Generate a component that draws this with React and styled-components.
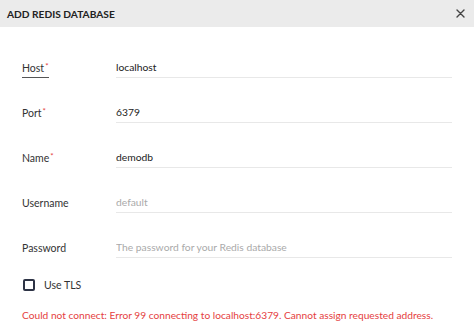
import React from 'react';
import styled, { createGlobalStyle } from 'styled-components';

const GlobalStyle = createGlobalStyle`
  body {
    margin: 0;
    background: #ffffff;
    font-family: 'Lato', 'Open Sans', sans-serif;
  }
`;

const Dialog = styled.div`
  width: 474px;
  height: 331px;
  background: #ffffff;
  overflow: hidden;
`;

const Header = styled.div`
  height: 27px;
  display: flex;
  align-items: center;
  justify-content: space-between;
  padding: 0 9px 0 7px;
  background: #ebebeb;
`;

const Title = styled.h1`
  margin: 0;
  font-size: 10.2px;
  font-weight: 700;
  color: #222;
`;

const CloseButton = styled.button`
  display: flex;
  align-items: center;
  justify-content: center;
  width: 10px;
  height: 10px;
  padding: 0;
  border: none;
  background: none;
  cursor: pointer;
`;

const Form = styled.form`
  display: flex;
  flex-direction: column;
  gap: 25px;
  padding: 31px 22px 0 22px;
`;

const Row = styled.div`
  display: grid;
  grid-template-columns: 94px 1fr;
  align-items: center;
`;

const Label = styled.label`
  justify-self: start;
  font-size: 10.5px;
  line-height: 18px;
  color: #333;
  border-bottom: 1px solid ${(p) => (p.$active ? '#555' : 'transparent')};
`;

const Required = styled.span`
  color: #e53e3e;
  font-size: 8px;
  vertical-align: top;
  position: relative;
  top: -2px;
  margin-left: 1px;
`;

const Field = styled.div`
  height: 19px;
  line-height: 19px;
  font-size: 10.3px;
  color: ${(p) => (p.$placeholder ? '#aaaaaa' : '#222')};
  border-bottom: 1px solid #e8e8e8;
  white-space: nowrap;
  overflow: hidden;
`;

const CheckRow = styled.label`
  display: flex;
  align-items: center;
  gap: 9px;
  margin-top: -4px;
  padding-left: 1px;
  font-size: 10.5px;
  color: #333;
`;

const Box = styled.span`
  width: 8px;
  height: 8px;
  border: 2px solid #2d3345;
  border-radius: 2px;
`;

const ErrorText = styled.div`
  margin-top: -7px;
  font-size: 10.2px;
  color: #e53e3e;
  white-space: nowrap;
`;

const fields = [
  { label: 'Host', value: 'localhost', required: true, active: true },
  { label: 'Port', value: '6379', required: true },
  { label: 'Name', value: 'demodb', required: true },
  { label: 'Username', value: 'default', placeholder: true },
  { label: 'Password', value: 'The password for your Redis database', placeholder: true },
];

const App = () => {
  return (
    <Dialog>
      <GlobalStyle />
      <Header>
        <Title>ADD REDIS DATABASE</Title>
        <CloseButton aria-label="Close">
          <svg width="9" height="9" viewBox="0 0 9 9">
            <path d="M1 1L8 8M8 1L1 8" stroke="#444" strokeWidth="1.4" strokeLinecap="round" />
          </svg>
        </CloseButton>
      </Header>

      <Form>
        {fields.map((f) => (
          <Row key={f.label}>
            <Label $active={f.active}>
              {f.label}
              {f.required && <Required>*</Required>}
            </Label>
            <Field $placeholder={f.placeholder}>{f.value}</Field>
          </Row>
        ))}

        <CheckRow>
          <Box />
          Use TLS
        </CheckRow>

        <ErrorText>
          Could not connect: Error 99 connecting to localhost:6379. Cannot assign requested address.
        </ErrorText>
      </Form>
    </Dialog>
  );
};

export default App;
